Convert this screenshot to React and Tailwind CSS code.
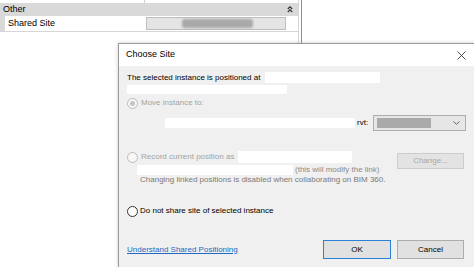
import React from "react";

function Radio({ disabled, checked }) {
  return (
    <span
      className={
        "relative flex h-[11px] w-[11px] shrink-0 items-center justify-center rounded-full border " +
        (disabled ? "border-[#bcbcbc] bg-[#f7f7f7]" : "border-[#333333] bg-white")
      }
    >
      {checked && <span className="h-[5px] w-[5px] rounded-full bg-[#c4c4c4]" />}
    </span>
  );
}

function PropertiesPanel() {
  return (
    <div className="flex h-[43px] w-[302px] border-r border-[#8e8e8e] text-[9px] text-black">
      <div className="flex w-[299px] flex-col border-r border-[#d6d6d6]">
        <div className="flex h-[3px]">
          <div className="w-[145px] border-r border-[#d0d0d0]" />
        </div>
        <div className="flex h-[13px] items-center justify-between bg-[#d9d9d9] pl-[3px] pr-[5px]">
          <span>Other</span>
          <svg width="6" height="7" viewBox="0 0 6 7" fill="none" stroke="#333" strokeWidth="1.2">
            <path d="M0.8 3 L3 0.8 L5.2 3" />
            <path d="M0.8 6 L3 3.8 L5.2 6" />
          </svg>
        </div>
        <div className="flex h-[16px] items-center border-b border-[#d6d6d6]">
          <div className="h-full w-[5px] bg-[#d9d9d9]" />
          <span className="w-[141px] pl-[3px]">Shared Site</span>
          <div className="flex h-[13px] w-[140px] items-center border border-[#bdbdbd] bg-[#e4e4e4]">
            <div className="ml-[35px] h-[9px] w-[71px] rounded-[3px] bg-[#a9a9a9] blur-[1px]" />
          </div>
        </div>
      </div>
    </div>
  );
}

function ChooseSiteDialog() {
  return (
    <div className="absolute left-[118px] top-[43px] flex h-[224px] w-[357px] flex-col border-l border-t border-[#9a9a9a] text-[8px] text-black shadow-[0_0_4px_rgba(0,0,0,0.2)]">
      <div className="flex h-[22px] shrink-0 items-center justify-between bg-white pl-[7px] pr-[9px]">
        <span className="text-[9px]">Choose Site</span>
        <svg width="9" height="9" viewBox="0 0 9 9" stroke="#333" strokeWidth="0.9">
          <path d="M0.5 0.5 L8.5 8.5 M8.5 0.5 L0.5 8.5" />
        </svg>
      </div>
      <div className="flex flex-1 flex-col bg-[#f0f0f0] pl-[8px]">
        <div className="mt-[6px] flex h-[11px] items-center">
          <span className="w-[138px]">The selected instance is positioned at</span>
          <div className="h-[11px] w-[115px] bg-white" />
        </div>
        <div className="mt-[2px] h-[9px] w-[160px] bg-white" />
        <div className="mt-[3px] flex h-[12px] items-center">
          <Radio disabled checked />
          <span className="ml-[3px] text-[#a3a3a3]">Move instance to:</span>
        </div>
        <div className="mt-[6px] flex h-[16px] items-center">
          <div className="ml-[38px] h-[10px] w-[190px] bg-white" />
          <span className="ml-[2px] w-[16px]">rvt:</span>
          <div className="flex h-[16px] w-[93px] items-center justify-between border border-[#adadad] bg-[#e6e6e6] pr-[5px]">
            <div className="ml-[3px] h-[10px] w-[54px] bg-[#aaaaaa] blur-[0.5px]" />
            <svg width="7" height="4" viewBox="0 0 7 4" fill="none" stroke="#555" strokeWidth="0.9">
              <path d="M0.5 0.5 L3.5 3.3 L6.5 0.5" />
            </svg>
          </div>
        </div>
        <div className="mt-[20px] flex">
          <div className="flex w-[270px] flex-col">
            <div className="flex h-[12px] items-center">
              <Radio disabled />
              <span className="ml-[3px] text-[#a3a3a3]">Record current position as</span>
              <div className="ml-[4px] h-[12px] w-[114px] bg-white" />
            </div>
            <div className="mt-[2px] flex h-[10px] items-center">
              <div className="ml-[10px] h-[10px] w-[156px] bg-white" />
              <span className="ml-[2px] whitespace-nowrap text-[#8a8a8a]">(this will modify the link)</span>
            </div>
            <div className="flex h-[10px] items-center pl-[13px]">
              <span className="whitespace-nowrap text-[#7a7a7a]">
                Changing linked positions is disabled when collaborating on BIM 360.
              </span>
            </div>
          </div>
          <div className="mt-[2px] flex h-[16px] w-[67px] items-center justify-center border border-[#cccccc] bg-[#e3e3e3] text-[#a8a8a8]">
            Change...
          </div>
        </div>
        <div className="mt-[20px] flex h-[12px] items-center">
          <Radio />
          <span className="ml-[2px]">Do not share site of selected instance</span>
        </div>
        <div className="mt-[23px] flex h-[19px] items-center">
          <a href="#" className="w-[196px] text-[#2468c2] underline">
            Understand Shared Positioning
          </a>
          <button className="flex h-[19px] w-[68px] items-center justify-center border border-[#2b7fd6] bg-[#e1e1e1] shadow-[inset_0_0_0_1px_#e1e1e1]">
            OK
          </button>
          <button className="ml-[6px] flex h-[19px] w-[67px] items-center justify-center border border-[#adadad] bg-[#e1e1e1]">
            Cancel
          </button>
        </div>
      </div>
    </div>
  );
}

export default function App() {
  return (
    <div
      className="relative h-[267px] w-[474px] overflow-hidden bg-white"
      style={{ fontFamily: '"Liberation Sans", Arial, sans-serif' }}
    >
      <PropertiesPanel />
      <ChooseSiteDialog />
    </div>
  );
}
